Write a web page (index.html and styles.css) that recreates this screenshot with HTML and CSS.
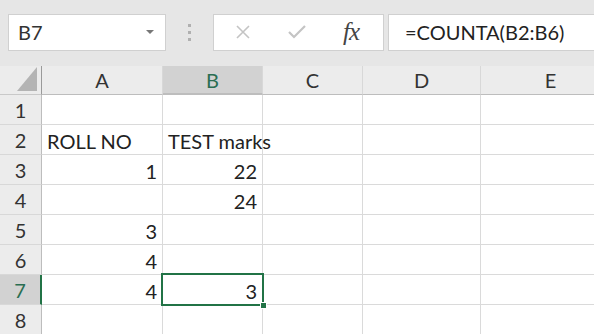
FILE: index.html
```html
<!DOCTYPE html>
<html lang="en">
<head>
  <meta charset="UTF-8">
  <title>Sheet</title>
  <link rel="stylesheet" href="styles.css">
</head>
<body>
  <div class="formula-bar">
    <div class="name-box">
      <span>B7</span>
      <span class="caret"></span>
    </div>
    <div class="grip"><i></i><i></i><i></i></div>
    <div class="func-box">
      <svg class="icon" width="16" height="16" viewBox="0 0 16 16">
        <path d="M2 2 L14 14 M14 2 L2 14" stroke="#c4c4c4" stroke-width="1.6" fill="none"/>
      </svg>
      <svg class="icon" width="20" height="16" viewBox="0 0 20 16">
        <path d="M2 8 L7 13 L18 2" stroke="#c4c4c4" stroke-width="2.2" fill="none"/>
      </svg>
      <span class="fx">fx</span>
    </div>
    <div class="formula">=COUNTA(B2:B6)</div>
  </div>

  <div class="sheet">
    <div class="hd corner"><span class="tri"></span></div>
    <div class="hd col">A</div>
    <div class="hd col sel-col">B</div>
    <div class="hd col">C</div>
    <div class="hd col">D</div>
    <div class="hd col">E</div>

    <div class="hd row">1</div>
    <div class="cell"></div><div class="cell"></div><div class="cell"></div><div class="cell"></div><div class="cell"></div>

    <div class="hd row">2</div>
    <div class="cell">ROLL NO</div><div class="cell">TEST marks</div><div class="cell"></div><div class="cell"></div><div class="cell"></div>

    <div class="hd row">3</div>
    <div class="cell num">1</div><div class="cell num">22</div><div class="cell"></div><div class="cell"></div><div class="cell"></div>

    <div class="hd row">4</div>
    <div class="cell"></div><div class="cell num">24</div><div class="cell"></div><div class="cell"></div><div class="cell"></div>

    <div class="hd row">5</div>
    <div class="cell num">3</div><div class="cell"></div><div class="cell"></div><div class="cell"></div><div class="cell"></div>

    <div class="hd row">6</div>
    <div class="cell num">4</div><div class="cell"></div><div class="cell"></div><div class="cell"></div><div class="cell"></div>

    <div class="hd row sel-row">7</div>
    <div class="cell num">4</div>
    <div class="cell num active">3<span class="handle"></span></div>
    <div class="cell"></div><div class="cell"></div><div class="cell"></div>

    <div class="hd row">8</div>
    <div class="cell"></div><div class="cell"></div><div class="cell"></div><div class="cell"></div><div class="cell"></div>
  </div>
</body>
</html>
```

FILE: styles.css
```css
* {
  box-sizing: border-box;
}
body {
  margin: 0;
  width: 594px;
  height: 334px;
  overflow: hidden;
  background: #fff;
  font-family: Lato, "Open Sans", sans-serif;
  color: #222;
}

/* formula bar */
.formula-bar {
  display: flex;
  align-items: center;
  height: 66px;
  padding: 0 0 2px 8px;
  background: #e6e6e6;
}
.name-box {
  display: flex;
  align-items: center;
  justify-content: space-between;
  width: 158px;
  height: 37px;
  padding: 0 11px 0 9px;
  background: #fff;
  border: 1px solid #d0d0d0;
  font-size: 20px;
  color: #333;
}
.caret {
  width: 0;
  height: 0;
  border-left: 4px solid transparent;
  border-right: 4px solid transparent;
  border-top: 4px solid #777;
}
.grip {
  display: flex;
  flex-direction: column;
  gap: 4px;
  width: 47px;
  align-items: center;
}
.grip i {
  display: block;
  width: 3px;
  height: 3px;
  background: #b0b0b0;
}
.func-box {
  display: flex;
  align-items: center;
  width: 171px;
  height: 37px;
  padding-left: 21px;
  background: #fff;
  border: 1px solid #d0d0d0;
}
.func-box .icon:nth-child(2) {
  margin-left: 36px;
}
.fx {
  margin-left: 36px;
  font-family: "Liberation Serif", serif;
  font-style: italic;
  font-size: 25px;
  color: #444;
  letter-spacing: -1px;
}
.formula {
  flex: 1;
  height: 37px;
  margin-left: 4px;
  padding-left: 16px;
  display: flex;
  align-items: center;
  background: #fff;
  border: 1px solid #d0d0d0;
  border-right: none;
  font-size: 20px;
  color: #222;
}

/* grid */
.sheet {
  display: grid;
  grid-template-columns: 42px 121px 100px 100px 118px 140px;
  grid-template-rows: 29px repeat(8, 30px);
  font-size: 20px;
}
.hd {
  display: flex;
  align-items: center;
  justify-content: center;
  background: #ececec;
  color: #333;
  border-right: 1px solid #c9c9c9;
  border-bottom: 1px solid #c9c9c9;
}
.hd.col {
  border-bottom-color: #bdbdbd;
  border-right-color: #d8d8d8;
}
.corner {
  position: relative;
  border-right-color: #9a9a9a;
}
.tri {
  position: absolute;
  right: 4px;
  bottom: 3px;
  width: 0;
  height: 0;
  border-left: 20px solid transparent;
  border-bottom: 24px solid #b4b4b4;
}
.hd.row {
  border-right-color: #bdbdbd;
  border-bottom-color: #d8d8d8;
}
.sel-col {
  background: #d2d2d2;
  color: #2a6e52;
  border-bottom: 2px solid #217346;
}
.hd.row.sel-row {
  background: #d2d2d2;
  color: #2a6e52;
  border-right: 2px solid #217346;
}
.cell {
  display: flex;
  align-items: center;
  padding: 2px 5px 0;
  border-right: 1px solid #dadada;
  border-bottom: 1px solid #dadada;
  white-space: nowrap;
}
.num {
  justify-content: flex-end;
}
.active {
  position: relative;
}
.active::before {
  content: "";
  position: absolute;
  left: -2px;
  top: -2px;
  right: -2px;
  bottom: -2px;
  border: 2px solid #217346;
}
.handle {
  position: absolute;
  right: -5px;
  bottom: -5px;
  width: 7px;
  height: 7px;
  background: #217346;
  border: 1px solid #fff;
}
```
